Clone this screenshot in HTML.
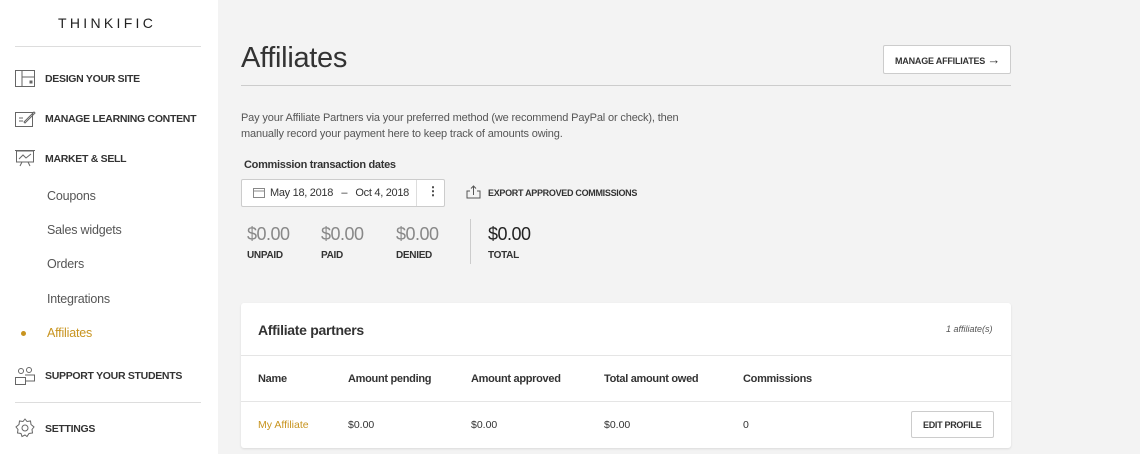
<!DOCTYPE html>
<html><head><style>
*{box-sizing:border-box;margin:0;padding:0}
body{width:1140px;height:454px;overflow:hidden;background:#f3f3f3;font-family:"Liberation Sans",sans-serif;color:#333;position:relative}
.sb{position:absolute;left:0;top:0;width:218px;height:454px;background:#fff}
.logo{position:absolute;left:58px;top:15px;font-size:14px;letter-spacing:3.3px;color:#222}
.hr{position:absolute;left:15px;width:186px;height:1px;background:#ddd}
.nav{position:absolute;left:45px;font-size:10.5px;font-weight:bold;color:#333;letter-spacing:-0.3px}
.sub{position:absolute;left:47px;font-size:12.5px;color:#555;letter-spacing:-0.2px}
.ic{position:absolute;left:15px}
.a{position:absolute}
.b{font-weight:bold;letter-spacing:-0.3px}
.n{font-size:18px;color:#888;letter-spacing:-0.5px}
</style></head><body>
<div class="sb">
<div class="logo">THINKIFIC</div>
<div class="hr" style="top:46px"></div>
<svg class="ic" style="top:70px" width="20" height="17" fill="none" stroke="#666" stroke-width="1"><rect x=".5" y=".5" width="19" height="16"/><line x1="7" y1="1" x2="7" y2="16"/><line x1="7" y1="7" x2="19" y2="7"/><rect x="15" y="11" width="2" height="2" fill="#666"/></svg>
<div class="nav" style="top:73px">DESIGN YOUR SITE</div>
<svg class="ic" style="top:110px" width="21" height="18" fill="none" stroke="#666"><rect x=".5" y="2.5" width="17" height="14"/><line x1="4" y1="8" x2="8" y2="8"/><line x1="4" y1="11" x2="8" y2="11"/><path d="M9 12 L19 2 L20 3 L10 13 Z"/></svg>
<div class="nav" style="top:113px">MANAGE LEARNING CONTENT</div>
<svg class="ic" style="top:150px" width="20" height="17" fill="none" stroke="#666"><line x1="0" y1=".5" x2="20" y2=".5"/><rect x="1.5" y="1" width="17" height="11"/><path d="M4 9 L8 5 L11 8 L16 4"/><path d="M7 12 L5 16 M13 12 L15 16"/></svg>
<div class="nav" style="top:153px">MARKET &amp; SELL</div>
<div class="sub" style="top:189px">Coupons</div>
<div class="sub" style="top:223px">Sales widgets</div>
<div class="sub" style="top:257px">Orders</div>
<div class="sub" style="top:292px">Integrations</div>
<div class="a" style="left:21px;top:331px;width:5px;height:5px;border-radius:50%;background:#c8941f"></div>
<div class="sub" style="top:326px;color:#c8941f">Affiliates</div>
<svg class="ic" style="top:367px" width="20" height="18" fill="none" stroke="#666"><circle cx="6" cy="4" r="2.5"/><circle cx="14" cy="3" r="2.5"/><rect x=".5" y="10.5" width="10" height="7"/><path d="M10 8 H19.5 V14 H11"/></svg>
<div class="nav" style="top:370px">SUPPORT YOUR STUDENTS</div>
<div class="hr" style="top:402px"></div>
<svg class="ic" style="top:418px" width="20" height="20" fill="none" stroke="#666"><circle cx="10" cy="10" r="3"/><path d="M10 1 L12 3.5 L15.5 3 L16 6.5 L19 9 L17 11.5 L17.5 15 L14 15.5 L12 18.5 L10 17 L7 18.5 L6 15.5 L2.5 15 L3 11.5 L1 9 L4 6.5 L4.5 3 L8 3.5 Z"/></svg>
<div class="nav" style="top:423px">SETTINGS</div>
</div>

<div class="a" style="left:241px;top:42px;font-size:29px;color:#333;letter-spacing:-0.3px">Affiliates</div>
<div class="a" style="left:883px;top:45px;width:128px;height:29px;background:#fff;border:1px solid #ccc;border-radius:2px;font-size:9px;font-weight:bold;padding:9px 0 0 11px;letter-spacing:-0.2px">MANAGE AFFILIATES <span style="font-size:13px;font-weight:normal;line-height:9px">&#8594;</span></div>
<div class="a" style="left:241px;top:85px;width:770px;height:1px;background:#ccc"></div>
<div class="a" style="left:241px;top:110px;font-size:11px;line-height:16px;color:#555;letter-spacing:-0.15px">Pay your Affiliate Partners via your preferred method (we recommend PayPal or check), then<br>manually record your payment here to keep track of amounts owing.</div>
<div class="a b" style="left:244px;top:159px;font-size:11px">Commission transaction dates</div>
<div class="a" style="left:241px;top:179px;width:204px;height:28px;background:#fff;border:1px solid #ccc;border-radius:2px"></div>
<div class="a" style="left:416px;top:180px;width:1px;height:26px;background:#ddd"></div>
<svg class="a" style="left:253px;top:187px" width="12" height="11" fill="none" stroke="#888"><rect x=".5" y="1.5" width="11" height="9"/><line x1="0" y1="4" x2="12" y2="4"/></svg>
<div class="a" style="left:270px;top:187px;font-size:11px;letter-spacing:-0.3px">May 18, 2018 &nbsp;&nbsp;–&nbsp;&nbsp; Oct 4, 2018</div>
<div class="a b" style="left:427px;top:184px;font-size:12px">&#8942;</div>
<svg class="a" style="left:466px;top:185px" width="15" height="14" fill="none" stroke="#555"><path d="M4 6 H1 V13 H14 V6 H11 M7.5 10 V1 M5 3.5 L7.5 1 L10 3.5"/></svg>
<div class="a b" style="left:488px;top:188px;font-size:9px">EXPORT APPROVED COMMISSIONS</div>
<div class="a n" style="left:247px;top:224px">$0.00</div>
<div class="a n" style="left:321px;top:224px">$0.00</div>
<div class="a n" style="left:396px;top:224px">$0.00</div>
<div class="a n" style="left:488px;top:224px;color:#222">$0.00</div>
<div class="a b" style="left:247px;top:250px;font-size:10px">UNPAID</div>
<div class="a b" style="left:321px;top:250px;font-size:10px">PAID</div>
<div class="a b" style="left:396px;top:250px;font-size:10px">DENIED</div>
<div class="a b" style="left:488px;top:250px;font-size:10px">TOTAL</div>
<div class="a" style="left:470px;top:219px;width:1px;height:45px;background:#ccc"></div>

<div class="a" style="left:241px;top:303px;width:770px;height:145px;background:#fff;border-radius:3px;box-shadow:0 1px 2px rgba(0,0,0,.1)">
<div class="a b" style="left:17px;top:19px;font-size:14px">Affiliate partners</div>
<div class="a" style="left:705px;top:21px;font-size:9px;font-style:italic;color:#555">1 affiliate(s)</div>
<div class="a" style="left:0;top:52px;width:770px;height:1px;background:#e5e5e5"></div>
<div class="a b" style="left:17px;top:70px;font-size:11px">Name</div>
<div class="a b" style="left:107px;top:70px;font-size:11px">Amount pending</div>
<div class="a b" style="left:230px;top:70px;font-size:11px">Amount approved</div>
<div class="a b" style="left:363px;top:70px;font-size:11px">Total amount owed</div>
<div class="a b" style="left:502px;top:70px;font-size:11px">Commissions</div>
<div class="a" style="left:0;top:98px;width:770px;height:1px;background:#e5e5e5"></div>
<div class="a" style="left:17px;top:116px;font-size:10.5px;color:#c8941f">My Affiliate</div>
<div class="a" style="left:107px;top:116px;font-size:10.5px">$0.00</div>
<div class="a" style="left:230px;top:116px;font-size:10.5px">$0.00</div>
<div class="a" style="left:363px;top:116px;font-size:10.5px">$0.00</div>
<div class="a" style="left:502px;top:116px;font-size:10.5px">0</div>
<div class="a b" style="left:670px;top:108px;width:83px;height:27px;border:1px solid #ccc;border-radius:2px;font-size:9px;padding:8px 0 0 11px">EDIT PROFILE</div>
</div>
</body></html>
